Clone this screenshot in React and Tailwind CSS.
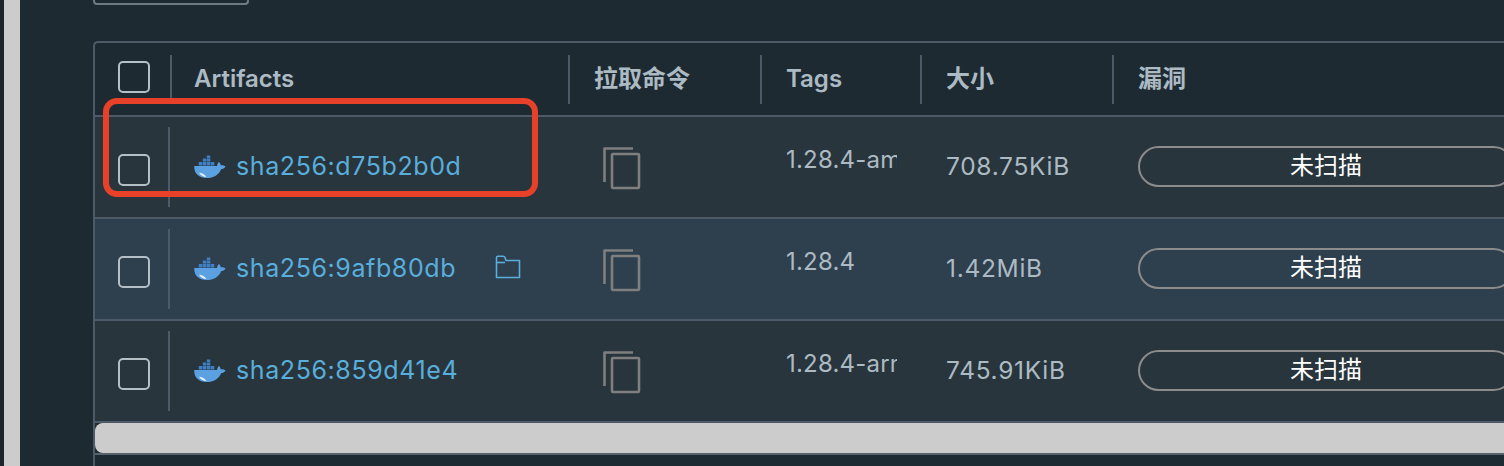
const rows = [
  { hash: 'sha256:d75b2b0d', tag: '1.28.4-amd64', size: '708.75KiB', bg: 'bg-[#28353c]' },
  { hash: 'sha256:9afb80db', tag: '1.28.4', size: '1.42MiB', bg: 'bg-[#2e3f4e]', folder: true },
  { hash: 'sha256:859d41e4', tag: '1.28.4-arm64', size: '745.91KiB', bg: 'bg-[#28353c]' },
]

const font = { fontFamily: 'Inter, "Noto Sans CJK SC", sans-serif' }

export default function App() {
  return (
    <div style={font} className="relative flex w-[1504px] h-[466px] overflow-hidden bg-[#1e2a32]">
      <div className="w-[4px] shrink-0 bg-[#1b252c]" />
      <div className="w-[16px] shrink-0 bg-[#cccccc]" />
      <main className="flex-1 min-w-0 pl-[73px]">
        <div className="w-[156px] h-[5px] border-x-2 border-b-2 border-[#6d7a82] rounded-b-[4px]" />
        <Table />
      </main>
      {/* annotation drawn over the screenshot */}
      <div className="absolute left-[103px] top-[98px] w-[435px] h-[99px] border-[6px] border-[#e8412a] rounded-[14px]" />
    </div>
  )
}

function Table() {
  return (
    <div className="mt-[36px] w-[1430px] h-[430px] border-l-2 border-t-2 border-[#4d5b68] rounded-tl-[5px]">
      <Header />
      {rows.map((row) => (
        <Row key={row.hash} row={row} />
      ))}
      <div className="h-[32px] border-b-2 border-[#56636e]">
        <div className="h-full bg-[#cccccc] rounded-l-[8px]" />
      </div>
    </div>
  )
}

function Header() {
  const cols = ['拉取命令', 'Tags', '大小', '漏洞']
  return (
    <div className="grid grid-cols-[75px_398px_192px_160px_192px_1fr] h-[74px] border-b-2 border-[#4d5b68]">
      <div className="pl-[23px] pt-[18px]">
        <Checkbox />
      </div>
      <HeadCell pad="pl-[22px]">Artifacts</HeadCell>
      {cols.map((c) => (
        <HeadCell key={c} pad="pl-[24px]">{c}</HeadCell>
      ))}
    </div>
  )
}

function HeadCell({ children, pad }) {
  return (
    <div className={`mt-[12px] h-[49px] border-l-2 border-[#4d5b68] ${pad} pt-[8px] text-[24px] leading-[32px] font-semibold text-[#acbac3]`}>
      {children}
    </div>
  )
}

function Row({ row }) {
  return (
    <div className={`grid grid-cols-[73px_400px_192px_160px_192px_1fr] h-[102px] border-b-2 border-[#4d5b68] ${row.bg}`}>
      <div className="pl-[23px] pt-[37px]">
        <Checkbox />
      </div>
      <div className="mt-[10px] h-[80px] border-l-2 border-[#4d5b68] pl-[24px] pt-[23px] flex items-start">
        <DockerIcon />
        <span className="ml-[10px] text-[25px] leading-[32px] tracking-[0.6px] text-[#5aaedb]">{row.hash}</span>
        {row.folder && <FolderIcon />}
      </div>
      <div className="pl-[35px] pt-[29px]">
        <CopyIcon />
      </div>
      <div className="pl-[26px] pt-[27px]">
        <div className="w-[111px] overflow-hidden whitespace-nowrap text-[24px] leading-[32px] tracking-[0.2px] text-[#acbac3]">{row.tag}</div>
      </div>
      <div className="pl-[26px] pt-[33px] text-[24.5px] leading-[32px] tracking-[0.7px] text-[#acbac3]">{row.size}</div>
      <div className="pl-[26px] pt-[29px]">
        <div className="w-[376px] h-[41px] pb-[2px] flex items-center justify-center border-2 border-[#8c8c8c] rounded-full text-[24px] text-white">
          未扫描
        </div>
      </div>
    </div>
  )
}

function Checkbox() {
  return <div className="w-[32px] h-[32px] border-2 border-[#b4bfc6] rounded-[5px]" />
}

function CopyIcon() {
  return (
    <svg width="38" height="44" viewBox="0 0 38 44" fill="none" stroke="#7f7f7f" strokeWidth="2.6" strokeLinejoin="round">
      <path d="M1.500 36V2.500H30" />
      <rect x="9" y="8" width="27" height="34" rx="1" />
    </svg>
  )
}

function FolderIcon() {
  return (
    <svg className="ml-[39px] mt-[3px]" width="26" height="24" viewBox="0 0 26 24" fill="none" stroke="#5aaedb" strokeWidth="1.6" strokeLinejoin="round">
      <path d="M1.500 22.500V2.500Q1.500 1.200 3 1.200H8Q9.500 1.200 10 2.500L11 5.500H24.500V22.500Z" />
      <path d="M1.500 7.500H10" />
    </svg>
  )
}

function DockerIcon() {
  return (
    <svg className="mt-[4px] shrink-0" width="32" height="24" viewBox="0 0 32 24">
      <path fill="#5ba0e0" d="M0.300 12H23C23.300 10 24.200 8.600 25 8C26 9 26.800 10.200 26.800 11.500C28.500 11 30 11.400 31.500 12.500C30.500 14.500 28.800 15.200 27 15.200C25.500 20.500 19.500 24 12.500 24C5 24 -0.200 19.500 0.300 12Z" />
      <path fill="#3f80c4" d="M4.800 8H8.300V11.600H4.800ZM8.800 8H12.300V11.600H8.800ZM12.800 8H16.300V11.600H12.800ZM16.800 8H20.300V11.600H16.800ZM8.800 4.500H12.300V7.600H8.800ZM12.800 4.500H16.300V7.600H12.800ZM12.800 1.500H16.300V4.100H12.800Z" />
      <path fill="#e6eff6" d="M5 18.800C8 18.800 10 20 12.500 23C9 23 6.500 21.300 5 18.800Z" />
    </svg>
  )
}
